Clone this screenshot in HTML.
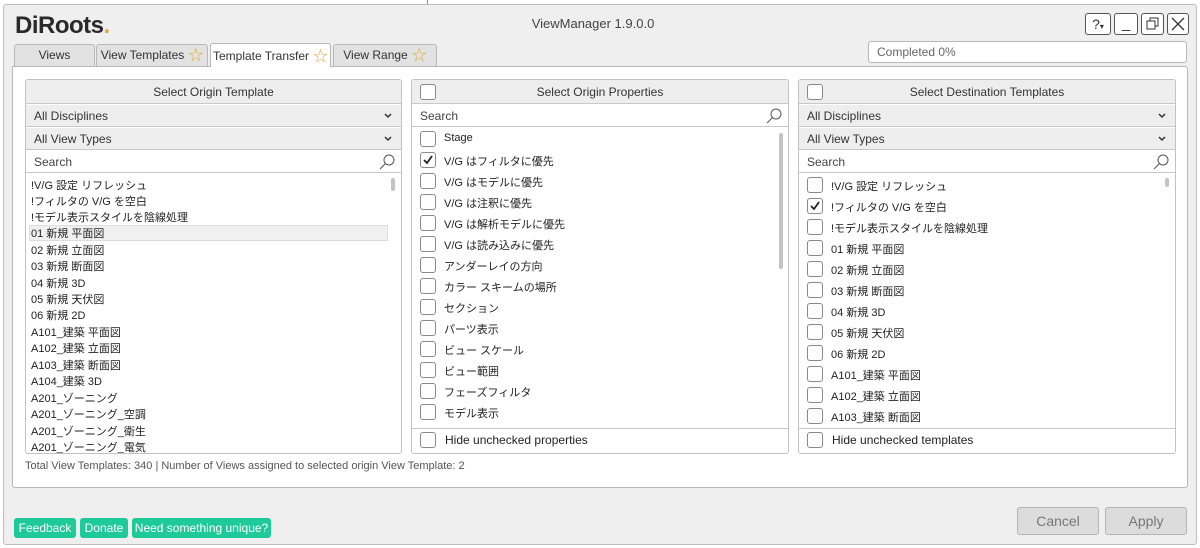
<!DOCTYPE html>
<html><head><meta charset="utf-8"><style>
*{box-sizing:border-box;margin:0;padding:0}
body{width:1200px;height:548px;background:#fff;font-family:"Liberation Sans","Noto Sans CJK JP",sans-serif;font-size:12px;color:#333;position:relative;overflow:hidden}
.a{position:absolute}
.win{left:3px;top:4px;width:1194px;height:541px;background:#efefef;border:1px solid #bcbcbc;border-radius:3px}
.tab{top:44px;height:22px;border:1px solid #b8b8b8;border-bottom:none;background:#e2e2e2;border-radius:3px 3px 0 0;font-size:12px;line-height:20px;text-align:center;color:#333}
.star{color:#e0a93a;font-size:15px;margin-left:4px;vertical-align:-1px}
.panel{border:1px solid #c2c2c2;background:#fff;border-radius:3px;overflow:hidden}
.hd{position:absolute;left:0;right:0;top:0;height:24px;background:#eeeeee;border-bottom:1px solid #c8c8c8;text-align:center;line-height:24px;color:#333}
.row{position:absolute;left:0;right:0;height:22px;background:#eeeeee;border-bottom:1px solid #c8c8c8;line-height:22px;padding-left:8px;color:#333}
.row svg{position:absolute;right:9px;top:8px}
.srch{position:absolute;left:0;right:0;height:22px;background:#fff;border-bottom:1px solid #c8c8c8;line-height:22px;padding-left:8px;color:#444}
.cb{position:absolute;width:16px;height:16px;border:1px solid #8a8a8a;border-radius:3px;background:#fff}
.it{position:absolute;left:5px;font-size:11px;white-space:nowrap;color:#222}
.ci{position:absolute;font-size:11px;white-space:nowrap;color:#222}
.sb{position:absolute;width:4px;background:#c4c4c4;border-radius:2px}
.wb{top:13px;height:22px;border:1px solid #555;border-radius:3px;background:#fff;text-align:center;line-height:20px;font-size:15px;color:#333}
.gb{top:518px;height:20px;background:#1ec99a;color:#fff;border-radius:3px;line-height:20px;text-align:center;font-size:12px}
.bb{top:507px;height:28px;width:82px;background:#dcdcdc;border:1px solid #b5b5b5;border-radius:3px;line-height:26px;text-align:center;font-size:14px;color:#777}
</style></head><body>
<div class="a" style="left:427px;top:0;width:1px;height:6px;background:#2bbf95"></div>
<div class="a win"></div>
<div class="a" style="left:15px;top:12px;font-size:24px;color:#2a2a2a;letter-spacing:-0.5px;font-weight:bold;-webkit-text-stroke:0">DiRoots<span style="color:#e0a93a">.</span></div>
<div class="a" style="left:0;width:1186px;top:16px;text-align:center;font-size:13px;color:#444">ViewManager 1.9.0.0</div>
<div class="a wb" style="left:1085px;width:26px;font-size:14px">?<span style="font-size:8px">▾</span></div>
<div class="a wb" style="left:1114px;width:24px">_</div>
<div class="a wb" style="left:1141px;width:23px"><svg width="14" height="14" style="margin-top:3px"><rect x="1" y="4" width="8" height="8" fill="none" stroke="#333"/><path d="M4 4V1h8v8H9" fill="none" stroke="#333"/></svg></div>
<div class="a wb" style="left:1167px;width:22px"><svg width="14" height="14" style="margin-top:3px"><path d="M1 1L13 13M13 1L1 13" stroke="#333" stroke-width="1.3"/></svg></div>
<div class="a" style="left:868px;top:41px;width:319px;height:22px;background:#fff;border:1px solid #b8b8b8;border-radius:3px;line-height:20px;padding-left:8px;color:#666">Completed 0%</div>

<div class="a" style="left:12px;top:66px;width:1176px;height:422px;background:#fff;border:1px solid #b8b8b8;border-radius:0 3px 3px 3px"></div>
<div class="a tab" style="left:14px;width:81px">Views</div>
<div class="a tab" style="left:96px;width:112px">View Templates<span class="star">☆</span></div>
<div class="a tab" style="left:210px;width:121px;top:43px;height:24px;background:#fff;z-index:2;line-height:24px">Template Transfer<span class="star">☆</span></div>
<div class="a tab" style="left:333px;width:104px">View Range<span class="star">☆</span></div>

<!-- panel 1 -->
<div class="a panel" style="left:25px;top:79px;width:377px;height:375px">
<div class="hd">Select Origin Template</div>
<div class="row" style="top:25px">All Disciplines<svg width="8" height="6"><path d="M1 1l3 3 3-3" fill="none" stroke="#333" stroke-width="1.5"/></svg></div>
<div class="row" style="top:48px">All View Types<svg width="8" height="6"><path d="M1 1l3 3 3-3" fill="none" stroke="#333" stroke-width="1.5"/></svg></div>
<div class="srch" style="top:71px">Search<svg class="a" style="right:6px;top:3px" width="16" height="16"><circle cx="10" cy="6" r="5" fill="none" stroke="#555"/><path d="M6.5 9.5L1 15" stroke="#555"/></svg></div>
<div class="a" style="left:3px;top:145px;width:359px;height:16px;background:#f0f0f0;border:1px solid #ddd"></div>
<div class="sb" style="left:365px;top:98px;height:13px"></div>
<div class="it" style="top:97px">!V/G 設定 リフレッシュ</div>
<div class="it" style="top:113px">!フィルタの V/G を空白</div>
<div class="it" style="top:129px">!モデル表示スタイルを陰線処理</div>
<div class="it" style="top:145px">01 新規 平面図</div>
<div class="it" style="top:162px">02 新規 立面図</div>
<div class="it" style="top:178px">03 新規 断面図</div>
<div class="it" style="top:195px">04 新規 3D</div>
<div class="it" style="top:211px">05 新規 天伏図</div>
<div class="it" style="top:227px">06 新規 2D</div>
<div class="it" style="top:244px">A101_建築 平面図</div>
<div class="it" style="top:260px">A102_建築 立面図</div>
<div class="it" style="top:277px">A103_建築 断面図</div>
<div class="it" style="top:293px">A104_建築 3D</div>
<div class="it" style="top:310px">A201_ゾーニング</div>
<div class="it" style="top:326px">A201_ゾーニング_空調</div>
<div class="it" style="top:343px">A201_ゾーニング_衛生</div>
<div class="it" style="top:359px">A201_ゾーニング_電気</div>
</div>

<!-- panel 2 -->
<div class="a panel" style="left:411px;top:79px;width:378px;height:375px">
<div class="hd">Select Origin Properties</div>
<div class="cb" style="left:8px;top:4px"></div>
<div class="srch" style="top:25px">Search<svg class="a" style="right:6px;top:3px" width="16" height="16"><circle cx="10" cy="6" r="5" fill="none" stroke="#555"/><path d="M6.5 9.5L1 15" stroke="#555"/></svg></div>
<div class="sb" style="left:367px;top:53px;height:136px"></div>
<div class="cb" style="left:8px;top:51px"></div><div class="ci" style="left:32px;top:52px">Stage</div>
<div class="cb" style="left:8px;top:72px"><svg width="14" height="14"><path d="M3 7l3 3 5-7" fill="none" stroke="#222" stroke-width="1.8"/></svg></div><div class="ci" style="left:32px;top:73px">V/G はフィルタに優先</div>
<div class="cb" style="left:8px;top:93px"></div><div class="ci" style="left:32px;top:94px">V/G はモデルに優先</div>
<div class="cb" style="left:8px;top:114px"></div><div class="ci" style="left:32px;top:115px">V/G は注釈に優先</div>
<div class="cb" style="left:8px;top:135px"></div><div class="ci" style="left:32px;top:136px">V/G は解析モデルに優先</div>
<div class="cb" style="left:8px;top:156px"></div><div class="ci" style="left:32px;top:157px">V/G は読み込みに優先</div>
<div class="cb" style="left:8px;top:177px"></div><div class="ci" style="left:32px;top:178px">アンダーレイの方向</div>
<div class="cb" style="left:8px;top:198px"></div><div class="ci" style="left:32px;top:199px">カラー スキームの場所</div>
<div class="cb" style="left:8px;top:219px"></div><div class="ci" style="left:32px;top:220px">セクション</div>
<div class="cb" style="left:8px;top:240px"></div><div class="ci" style="left:32px;top:241px">パーツ表示</div>
<div class="cb" style="left:8px;top:261px"></div><div class="ci" style="left:32px;top:262px">ビュー スケール</div>
<div class="cb" style="left:8px;top:282px"></div><div class="ci" style="left:32px;top:283px">ビュー範囲</div>
<div class="cb" style="left:8px;top:303px"></div><div class="ci" style="left:32px;top:304px">フェーズフィルタ</div>
<div class="cb" style="left:8px;top:324px"></div><div class="ci" style="left:32px;top:325px">モデル表示</div>
<div class="a" style="left:0;right:0;top:348px;height:27px;background:#fff;border-top:1px solid #c8c8c8"></div>
<div class="cb" style="left:8px;top:352px"></div><div class="ci" style="left:33px;top:353px;font-size:12px">Hide unchecked properties</div>
</div>

<!-- panel 3 -->
<div class="a panel" style="left:798px;top:79px;width:378px;height:375px">
<div class="hd">Select Destination Templates</div>
<div class="cb" style="left:8px;top:4px"></div>
<div class="row" style="top:25px">All Disciplines<svg width="8" height="6"><path d="M1 1l3 3 3-3" fill="none" stroke="#333" stroke-width="1.5"/></svg></div>
<div class="row" style="top:48px">All View Types<svg width="8" height="6"><path d="M1 1l3 3 3-3" fill="none" stroke="#333" stroke-width="1.5"/></svg></div>
<div class="srch" style="top:71px">Search<svg class="a" style="right:6px;top:3px" width="16" height="16"><circle cx="10" cy="6" r="5" fill="none" stroke="#555"/><path d="M6.5 9.5L1 15" stroke="#555"/></svg></div>
<div class="sb" style="left:366px;top:98px;height:9px"></div>
<div class="cb" style="left:8px;top:97px"></div><div class="ci" style="left:32px;top:98px">!V/G 設定 リフレッシュ</div>
<div class="cb" style="left:8px;top:118px"><svg width="14" height="14"><path d="M3 7l3 3 5-7" fill="none" stroke="#222" stroke-width="1.8"/></svg></div><div class="ci" style="left:32px;top:119px">!フィルタの V/G を空白</div>
<div class="cb" style="left:8px;top:139px"></div><div class="ci" style="left:32px;top:140px">!モデル表示スタイルを陰線処理</div>
<div class="cb" style="left:8px;top:160px"></div><div class="ci" style="left:32px;top:161px">01 新規 平面図</div>
<div class="cb" style="left:8px;top:181px"></div><div class="ci" style="left:32px;top:182px">02 新規 立面図</div>
<div class="cb" style="left:8px;top:202px"></div><div class="ci" style="left:32px;top:203px">03 新規 断面図</div>
<div class="cb" style="left:8px;top:223px"></div><div class="ci" style="left:32px;top:224px">04 新規 3D</div>
<div class="cb" style="left:8px;top:244px"></div><div class="ci" style="left:32px;top:245px">05 新規 天伏図</div>
<div class="cb" style="left:8px;top:265px"></div><div class="ci" style="left:32px;top:266px">06 新規 2D</div>
<div class="cb" style="left:8px;top:286px"></div><div class="ci" style="left:32px;top:287px">A101_建築 平面図</div>
<div class="cb" style="left:8px;top:307px"></div><div class="ci" style="left:32px;top:308px">A102_建築 立面図</div>
<div class="cb" style="left:8px;top:328px"></div><div class="ci" style="left:32px;top:329px">A103_建築 断面図</div>
<div class="a" style="left:0;right:0;top:348px;height:27px;background:#fff;border-top:1px solid #c8c8c8"></div>
<div class="cb" style="left:8px;top:352px"></div><div class="ci" style="left:33px;top:353px;font-size:12px">Hide unchecked templates</div>
</div>

<div class="a" style="left:25px;top:460px;font-size:11px;color:#555">Total View Templates: 340 | Number of Views assigned to selected origin View Template: 2</div>

<div class="a gb" style="left:14px;width:62px">Feedback</div>
<div class="a gb" style="left:80px;width:48px">Donate</div>
<div class="a gb" style="left:132px;width:139px">Need something unique?</div>
<div class="a bb" style="left:1017px">Cancel</div>
<div class="a bb" style="left:1105px">Apply</div>
</body></html>
